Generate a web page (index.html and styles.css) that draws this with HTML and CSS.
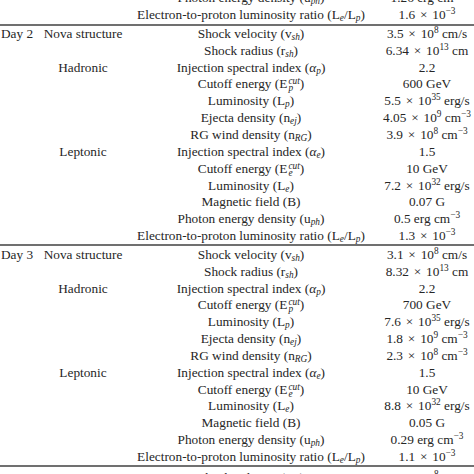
FILE: index.html
```html
<!DOCTYPE html>
<html>
<head>
<meta charset="utf-8">
<link rel="stylesheet" href="styles.css">
</head>
<body>
<table class="params">
<colgroup><col class="c-day"><col class="c-comp"><col class="c-param"><col class="c-val"></colgroup>
<tbody>
<tr><td></td><td></td><td>Photon energy density (u<sub><i>ph</i></sub>)</td><td>1.26 erg cm<sup>−3</sup></td></tr>
<tr class="end"><td></td><td></td><td>Electron-to-proton luminosity ratio (L<sub><i>e</i></sub>/L<sub><i>p</i></sub>)</td><td>1.6 <span class="x">×</span> 10<sup>−3</sup></td></tr>

<tr><td class="day">Day 2</td><td>Nova structure</td><td>Shock velocity (v<sub><i>sh</i></sub>)</td><td>3.5 <span class="x">×</span> 10<sup>8</sup> cm/s</td></tr>
<tr><td></td><td></td><td>Shock radius (r<sub><i>sh</i></sub>)</td><td>6.34 <span class="x">×</span> 10<sup>13</sup> cm</td></tr>
<tr><td></td><td>Hadronic</td><td>Injection spectral index (<i>α</i><sub><i>p</i></sub>)</td><td>2.2</td></tr>
<tr><td></td><td></td><td>Cutoff energy (E<span class="ss"><span><i>cut</i></span><span><i>p</i></span></span>)</td><td>600 GeV</td></tr>
<tr><td></td><td></td><td>Luminosity (L<sub><i>p</i></sub>)</td><td>5.5 <span class="x">×</span> 10<sup>35</sup> erg/s</td></tr>
<tr><td></td><td></td><td>Ejecta density (n<sub><i>ej</i></sub>)</td><td>4.05 <span class="x">×</span> 10<sup>9</sup> cm<sup>−3</sup></td></tr>
<tr><td></td><td></td><td>RG wind density (n<sub><i>RG</i></sub>)</td><td>3.9 <span class="x">×</span> 10<sup>8</sup> cm<sup>−3</sup></td></tr>
<tr><td></td><td>Leptonic</td><td>Injection spectral index (<i>α</i><sub><i>e</i></sub>)</td><td>1.5</td></tr>
<tr><td></td><td></td><td>Cutoff energy (E<span class="ss"><span><i>cut</i></span><span><i>e</i></span></span>)</td><td>10 GeV</td></tr>
<tr><td></td><td></td><td>Luminosity (L<sub><i>e</i></sub>)</td><td>7.2 <span class="x">×</span> 10<sup>32</sup> erg/s</td></tr>
<tr><td></td><td></td><td>Magnetic field (B)</td><td>0.07 G</td></tr>
<tr><td></td><td></td><td>Photon energy density (u<sub><i>ph</i></sub>)</td><td>0.5 erg cm<sup>−3</sup></td></tr>
<tr class="end"><td></td><td></td><td>Electron-to-proton luminosity ratio (L<sub><i>e</i></sub>/L<sub><i>p</i></sub>)</td><td>1.3 <span class="x">×</span> 10<sup>−3</sup></td></tr>

<tr><td class="day">Day 3</td><td>Nova structure</td><td>Shock velocity (v<sub><i>sh</i></sub>)</td><td>3.1 <span class="x">×</span> 10<sup>8</sup> cm/s</td></tr>
<tr><td></td><td></td><td>Shock radius (r<sub><i>sh</i></sub>)</td><td>8.32 <span class="x">×</span> 10<sup>13</sup> cm</td></tr>
<tr><td></td><td>Hadronic</td><td>Injection spectral index (<i>α</i><sub><i>p</i></sub>)</td><td>2.2</td></tr>
<tr><td></td><td></td><td>Cutoff energy (E<span class="ss"><span><i>cut</i></span><span><i>p</i></span></span>)</td><td>700 GeV</td></tr>
<tr><td></td><td></td><td>Luminosity (L<sub><i>p</i></sub>)</td><td>7.6 <span class="x">×</span> 10<sup>35</sup> erg/s</td></tr>
<tr><td></td><td></td><td>Ejecta density (n<sub><i>ej</i></sub>)</td><td>1.8 <span class="x">×</span> 10<sup>9</sup> cm<sup>−3</sup></td></tr>
<tr><td></td><td></td><td>RG wind density (n<sub><i>RG</i></sub>)</td><td>2.3 <span class="x">×</span> 10<sup>8</sup> cm<sup>−3</sup></td></tr>
<tr><td></td><td>Leptonic</td><td>Injection spectral index (<i>α</i><sub><i>e</i></sub>)</td><td>1.5</td></tr>
<tr><td></td><td></td><td>Cutoff energy (E<span class="ss"><span><i>cut</i></span><span><i>e</i></span></span>)</td><td>10 GeV</td></tr>
<tr><td></td><td></td><td>Luminosity (L<sub><i>e</i></sub>)</td><td>8.8 <span class="x">×</span> 10<sup>32</sup> erg/s</td></tr>
<tr><td></td><td></td><td>Magnetic field (B)</td><td>0.05 G</td></tr>
<tr><td></td><td></td><td>Photon energy density (u<sub><i>ph</i></sub>)</td><td>0.29 erg cm<sup>−3</sup></td></tr>
<tr class="end"><td></td><td></td><td>Electron-to-proton luminosity ratio (L<sub><i>e</i></sub>/L<sub><i>p</i></sub>)</td><td>1.1 <span class="x">×</span> 10<sup>−3</sup></td></tr>

<tr class="next"><td class="day">Day 4</td><td>Nova structure</td><td>Shock velocity (v<sub><i>sh</i></sub>)</td><td>2.9 <span class="x">×</span> 10<sup>8</sup> cm/s</td></tr>
</tbody>
</table>
</body>
</html>
```

FILE: styles.css
```css
html, body {
  margin: 0;
  padding: 0;
  background: #fff;
  overflow: hidden;
  width: 474px;
  height: 474px;
}

.params {
  border-collapse: collapse;
  table-layout: fixed;
  width: 478px;
  margin-top: -10.2px;
  font-family: "Liberation Serif", "DejaVu Serif", serif;
  font-size: 13.3px;
  color: #262626;
}

.c-day { width: 40px; }
.c-comp { width: 86px; }
.c-param { width: 250px; }
.c-val { width: 102px; }

.params td {
  height: 16.85px;
  line-height: 16px;
  padding: 0;
  text-align: center;
  white-space: nowrap;
  vertical-align: middle;
}

.params td.day {
  text-align: left;
  padding-left: 1px;
}

.params tr.end td {
  border-bottom: 2px solid #707070;
}

.params tr.next td {
  padding-top: 2px;
}

.params sub,
.params sup {
  font-size: 0.7em;
  line-height: 0;
}

.params sub { vertical-align: -0.25em; }
.params sup { vertical-align: 0.5em; }

.x {
  margin: 0 1.5px;
}

.ss {
  display: inline-flex;
  flex-direction: column;
  height: 14px;
  font-size: 9.3px;
  line-height: 7px;
  vertical-align: middle;
  text-align: left;
  margin-left: 1px;
}
```
